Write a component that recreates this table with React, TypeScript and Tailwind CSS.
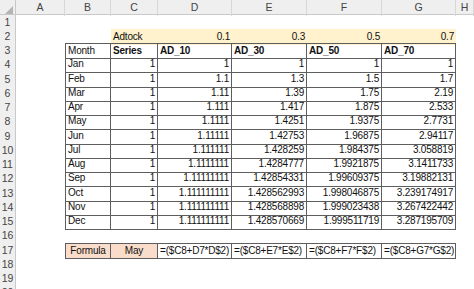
import React from 'react';

type Cell = { v?: string; a?: 'l' | 'r' | 'c'; b?: boolean; fill?: 'y' | 'p'; box?: boolean };

const cols = ['A', 'B', 'C', 'D', 'E', 'F', 'G', 'H'];

const data: [string, string, string, string, string][] = [
  ['Jan', '1', '1', '1', '1'],
  ['Feb', '1.1', '1.3', '1.5', '1.7'],
  ['Mar', '1.11', '1.39', '1.75', '2.19'],
  ['Apr', '1.111', '1.417', '1.875', '2.533'],
  ['May', '1.1111', '1.4251', '1.9375', '2.7731'],
  ['Jun', '1.11111', '1.42753', '1.96875', '2.94117'],
  ['Jul', '1.111111', '1.428259', '1.984375', '3.058819'],
  ['Aug', '1.1111111', '1.4284777', '1.9921875', '3.1411733'],
  ['Sep', '1.11111111', '1.42854331', '1.99609375', '3.19882131'],
  ['Oct', '1.111111111', '1.428562993', '1.998046875', '3.239174917'],
  ['Nov', '1.111111111', '1.428568898', '1.999023438', '3.267422442'],
  ['Dec', '1.111111111', '1.428570669', '1.999511719', '3.287195709'],
];

function buildRows(): Cell[][] {
  const rows: Cell[][] = [];
  rows.push([{}, {}, {}, {}, {}, {}, {}, {}]);
  rows.push([
    {}, {},
    { v: 'Adtock', a: 'l', fill: 'y' },
    { v: '0.1', a: 'r', fill: 'y' },
    { v: '0.3', a: 'r', fill: 'y' },
    { v: '0.5', a: 'r', fill: 'y' },
    { v: '0.7', a: 'r', fill: 'y' },
    {},
  ]);
  rows.push([
    {},
    { v: 'Month', a: 'l', box: true },
    { v: 'Series', a: 'l', b: true, box: true },
    { v: 'AD_10', a: 'l', b: true, box: true },
    { v: 'AD_30', a: 'l', b: true, box: true },
    { v: 'AD_50', a: 'l', b: true, box: true },
    { v: 'AD_70', a: 'l', b: true, box: true },
    {},
  ]);
  data.forEach(([m, d, e, f, g]) => {
    rows.push([
      {},
      { v: m, a: 'l', box: true },
      { v: '1', a: 'r', box: true },
      { v: d, a: 'r', box: true },
      { v: e, a: 'r', box: true },
      { v: f, a: 'r', box: true },
      { v: g, a: 'r', box: true },
      {},
    ]);
  });
  rows.push([{}, {}, {}, {}, {}, {}, {}, {}]);
  rows.push([
    {},
    { v: 'Formula', a: 'c', fill: 'p', box: true },
    { v: 'May', a: 'c', fill: 'p', box: true },
    { v: '=($C8+D7*D$2)', a: 'l', box: true },
    { v: '=($C8+E7*E$2)', a: 'l', box: true },
    { v: '=($C8+F7*F$2)', a: 'l', box: true },
    { v: '=($C8+G7*G$2)', a: 'l', box: true },
    {},
  ]);
  rows.push([{}, {}, {}, {}, {}, {}, {}, {}]);
  rows.push([{}, {}, {}, {}, {}, {}, {}, {}]);
  rows.push([{}, {}, {}, {}, {}, {}, {}, {}]);
  return rows;
}

const gridCols = 'grid grid-cols-[16px_49px_46px_47px_74px_75px_75px_74px_1fr]';

export default function App() {
  const rows = buildRows();
  const topRows = [3, 17];

  return (
    <div
      className="w-[474px] h-[289px] overflow-hidden bg-white text-[10px] text-[#111]"
      style={{ fontFamily: '"Liberation Sans", Arial, sans-serif' }}
    >
      {/* column header */}
      <div className={`${gridCols} h-[15px] bg-[#efefef] border-b border-[#c9c9c9] text-[#444]`}>
        <div className="relative border-r border-[#c9c9c9]">
          <svg className="absolute right-[2px] bottom-[2px]" width="8" height="8" viewBox="0 0 8 8">
            <polygon points="8,0 8,8 0,8" fill="#b4b4b4" />
          </svg>
        </div>
        {cols.map((c) => (
          <div key={c} className="flex items-center justify-center border-r border-[#d8d8d8] text-[10.5px]">
            {c}
          </div>
        ))}
      </div>

      {rows.map((row, i) => {
        const rn = i + 1;
        return (
          <div key={rn} className={`${gridCols} ${i % 4 === 3 ? 'h-[15px]' : 'h-[14px]'}`}>
            <div className="flex items-center justify-center bg-[#efefef] border-r border-[#c9c9c9] text-[#444] text-[10.5px]">
              {rn}
            </div>
            {row.map((cell, j) => {
              const cls = [
                'flex items-center overflow-hidden whitespace-nowrap px-[2px] tracking-[-0.2px] leading-none',
                cell.a === 'r' ? 'justify-end' : cell.a === 'c' ? 'justify-center' : 'justify-start',
                cell.b ? 'font-bold' : '',
                cell.fill === 'y' ? 'bg-[#fff2cc]' : cell.fill === 'p' ? 'bg-[#f9dcc9]' : '',
                cell.box ? 'border-r border-b border-[#5e5e5e]' : '',
                cell.box && j === 1 ? 'border-l' : '',
                cell.box && topRows.includes(rn) ? 'border-t' : '',
              ].join(' ');
              return (
                <div key={j} className={cls}>
                  {cell.v}
                </div>
              );
            })}
          </div>
        );
      })}
    </div>
  );
}
